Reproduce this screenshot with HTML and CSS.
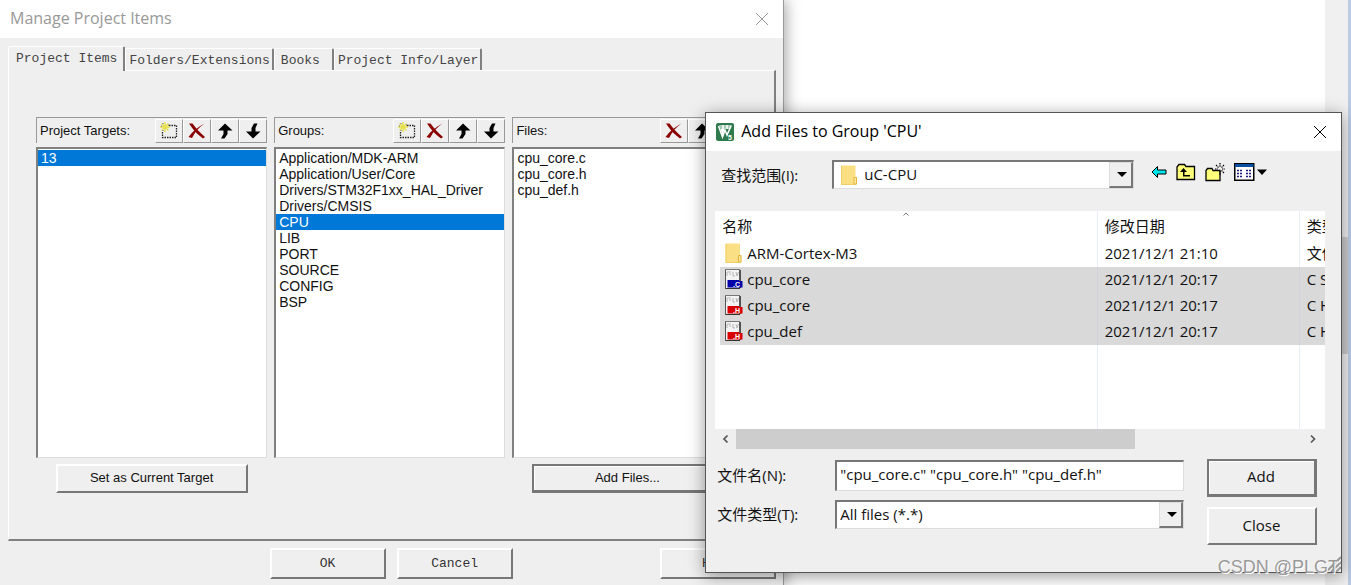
FILE: index.html
```html
<!DOCTYPE html>
<html lang="zh-CN">
<head>
    <meta charset="UTF-8">
    <meta name="viewport" content="width=device-width, initial-scale=1.0">
    <title>Manage Project Items</title>
    <link rel="stylesheet" href="styles.css">
</head>
<body>
    <!-- shared toolbar icons -->
    <svg class="sprite" aria-hidden="true">
        <symbol id="icon-new" viewBox="0 0 18 18">
            <path d="M9 3.5H16.5V15.5H2.5V9" fill="none" stroke="#222" stroke-width="1.3" stroke-dasharray="1.5 1"/>
            <path d="M5 0v10M0 5h10M1.500 1.500l7 7M8.500 1.500l-7 7" stroke="#e6e04a" stroke-width="1.4"/>
            <path d="M3 1v1M1 4h1M8 3h1M3 8v1" stroke="#666" stroke-width="1"/>
        </symbol>
        <symbol id="icon-delete" viewBox="0 0 18 18">
            <path d="M1 1.500L4.500 1.500C8 6 12 11 17 15L15 16.500C10 13 5 8 1 1.500Z" fill="#8b0000"/>
            <path d="M16.500 1.500C11 5 7 10 4 16L.5 15C5 9 10 5 16.500 1.500Z" fill="#8b0000"/>
        </symbol>
        <symbol id="icon-up" viewBox="0 0 18 18">
            <path d="M9 1.500L16.500 8.500H11.500V12L8.500 16.500H5L7.500 12V8.500H2Z" fill="#000"/>
        </symbol>
        <symbol id="icon-down" viewBox="0 0 18 18">
            <path d="M9 16.500L16.500 9.500H11.500V6L13.500 1.500H10L7.500 6V9.500H2Z" fill="#000"/>
        </symbol>
        <symbol id="icon-folder" viewBox="0 0 18 20">
            <path d="M1 .5H15.500V12H17V19.500H1Z" fill="#fbdf85"/>
            <path d="M1.500 1V19M1 19.500H16" stroke="#f0cf68" fill="none"/>
            <path d="M14 12.500H16.500V19H14Z" fill="#ffe9a3" stroke="#e2b63c"/>
        </symbol>
        <symbol id="icon-file" viewBox="0 0 19 20">
            <path d="M1 .5H16V19.500H1Z" fill="#f4f4f4"/>
            <path d="M1.500 0V20" stroke="#555" fill="none"/>
            <path d="M16 1V19" stroke="#222" stroke-width="1.5" fill="none"/>
            <path d="M1 .5H16" stroke="#777" fill="none"/>
            <path d="M3 3H7M3 3V7M5 5H7M9 3v4h2M12 3l1 4 1.500-4" stroke="#b5b5b5" fill="none"/>
            <path d="M3.500 11H15V12H18.500V18.500H3.500Z" fill="currentColor"/>
            <path d="M2 19.500H16" stroke="#333"/>
        </symbol>
    </svg>

    <div class="desktop">
        <div class="editor-scroll"><div class="editor-thumb"></div></div>

        <div class="window manage">
            <div class="titlebar">
                <span class="title">Manage Project Items</span>
                <button class="close" aria-label="Close window">
                    <svg viewBox="0 0 14 14"><path d="M1 1L13 13M13 1L1 13" stroke="currentColor"/></svg>
                </button>
            </div>

            <div class="tabs" role="tablist">
                <button class="tab active" role="tab">Project Items</button>
                <button class="tab" role="tab">Folders/Extensions</button>
                <button class="tab books" role="tab">Books</button>
                <button class="tab" role="tab">Project Info/Layer</button>
            </div>

            <div class="panel">
                <div class="column">
                    <div class="column-head">
                        <span>Project Targets:</span>
                        <div class="tools">
                            <button aria-label="New"><svg><use href="#icon-new"/></svg></button>
                            <button aria-label="Delete"><svg><use href="#icon-delete"/></svg></button>
                            <button aria-label="Move up"><svg><use href="#icon-up"/></svg></button>
                            <button aria-label="Move down"><svg><use href="#icon-down"/></svg></button>
                        </div>
                    </div>
                    <ul class="list">
                        <li class="selected">13</li>
                    </ul>
                    <button class="btn wide">Set as Current Target</button>
                </div>

                <div class="column">
                    <div class="column-head">
                        <span>Groups:</span>
                        <div class="tools">
                            <button aria-label="New"><svg><use href="#icon-new"/></svg></button>
                            <button aria-label="Delete"><svg><use href="#icon-delete"/></svg></button>
                            <button aria-label="Move up"><svg><use href="#icon-up"/></svg></button>
                            <button aria-label="Move down"><svg><use href="#icon-down"/></svg></button>
                        </div>
                    </div>
                    <ul class="list">
                        <li>Application/MDK-ARM</li>
                        <li>Application/User/Core</li>
                        <li>Drivers/STM32F1xx_HAL_Driver</li>
                        <li>Drivers/CMSIS</li>
                        <li class="selected">CPU</li>
                        <li>LIB</li>
                        <li>PORT</li>
                        <li>SOURCE</li>
                        <li>CONFIG</li>
                        <li>BSP</li>
                    </ul>
                </div>

                <div class="column">
                    <div class="column-head">
                        <span>Files:</span>
                        <div class="tools">
                            <button aria-label="Delete"><svg><use href="#icon-delete"/></svg></button>
                            <button aria-label="Move up"><svg><use href="#icon-up"/></svg></button>
                            <button aria-label="Move down"><svg><use href="#icon-down"/></svg></button>
                        </div>
                    </div>
                    <ul class="list">
                        <li>cpu_core.c</li>
                        <li>cpu_core.h</li>
                        <li>cpu_def.h</li>
                    </ul>
                    <button class="btn wide default">Add Files...</button>
                </div>
            </div>

            <div class="manage-footer">
                <button class="btn">OK</button>
                <button class="btn">Cancel</button>
                <button class="btn help">Help</button>
            </div>
        </div>

        <div class="window add-files">
            <div class="titlebar">
                <svg class="app-icon" viewBox="0 0 18 18">
                    <rect width="18" height="18" rx="2" fill="#2f7a4c"/>
                    <path d="M3 2H16L14.500 6H4.500Z" fill="#a9cbb5"/>
                    <path d="M2.500 3L6.500 14L9 7L11 12L15 3M7 2V6M11 2V6" fill="none" stroke="#fff" stroke-width="1.500"/>
                    <path d="M4.500 6H8.500L6.500 14Z" fill="#fff"/>
                    <text x="12" y="17" class="icon-text">5</text>
                </svg>
                <span class="title">Add Files to Group 'CPU'</span>
                <button class="close" aria-label="Close window">
                    <svg viewBox="0 0 14 14"><path d="M1 1L13 13M13 1L1 13" stroke="currentColor"/></svg>
                </button>
            </div>

            <div class="lookin">
                <label for="lookin">查找范围(I):</label>
                <div class="combo with-icon">
                    <svg class="combo-icon"><use href="#icon-folder"/></svg>
                    <select id="lookin">
                        <option>uC-CPU</option>
                    </select>
                </div>
                <div class="nav">
                    <button aria-label="Back">
                        <svg width="16" height="14" viewBox="0 0 16 14"><path d="M1 7L6.500 1.500V5H15V9H6.500V12.500Z" fill="#00e5ee" stroke="#000"/></svg>
                    </button>
                    <button aria-label="Up one level">
                        <svg width="20" height="18" viewBox="0 0 20 18"><path d="M1 16.500V4L3 1.500H8.500L10 3.500H18.500V16.500Z" fill="#ffff7a" stroke="#000" stroke-width="1.300"/><path d="M7.500 5L11 9H8.500V12H14V13.500H7V9H4Z" fill="#000"/></svg>
                    </button>
                    <button aria-label="New folder">
                        <svg width="20" height="19" viewBox="0 0 20 19"><path d="M1 17.500V7.500L2.500 5.500H7L8 7.500H15V17.500Z" fill="#ffff7a" stroke="#000" stroke-width="1.300"/><path d="M15 0v4M15 8v4M10 6h3M17 6h3M11 2l2.500 2.500M19 2l-2.500 2.500M19 10l-2.500-2.500" stroke="#000" stroke-width="1.200" stroke-dasharray="1.500 .7"/></svg>
                    </button>
                    <button aria-label="View">
                        <svg width="33" height="18" viewBox="0 0 33 18"><rect x=".75" y=".75" width="19" height="16.500" fill="#fff" stroke="#000" stroke-width="1.500"/><rect x="1" y="1" width="18.500" height="3" fill="#0a4fa0"/><path d="M3 7.500H9M12 7.500H18M3 10.500H9M12 10.500H18M3 13.500H9M12 13.500H18" stroke="#1c1c7c" stroke-width="1.500" stroke-dasharray="2 1"/><path d="M23 6.500H33L28 12Z" fill="#000"/></svg>
                    </button>
                </div>
            </div>

            <div class="browser">
                <svg class="sort-mark" viewBox="0 0 6 4"><path d="M.5 3.500L3 1L5.500 3.500" fill="none" stroke="#777"/></svg>
                <table>
                    <thead>
                        <tr><th class="name">名称</th><th class="date">修改日期</th><th>类型</th></tr>
                    </thead>
                    <tbody>
                        <tr>
                            <td><div class="file"><svg><use href="#icon-folder"/></svg>ARM-Cortex-M3</div></td>
                            <td>2021/12/1 21:10</td>
                            <td>文件夹</td>
                        </tr>
                        <tr class="picked">
                            <td><div class="file"><svg class="c"><use href="#icon-file"/><text x="9" y="18" class="icon-text">.C</text></svg>cpu_core</div></td>
                            <td>2021/12/1 20:17</td>
                            <td>C Source</td>
                        </tr>
                        <tr class="picked">
                            <td><div class="file"><svg class="h"><use href="#icon-file"/><text x="9" y="18" class="icon-text">.H</text></svg>cpu_core</div></td>
                            <td>2021/12/1 20:17</td>
                            <td>C Header</td>
                        </tr>
                        <tr class="picked">
                            <td><div class="file"><svg class="h"><use href="#icon-file"/><text x="9" y="18" class="icon-text">.H</text></svg>cpu_def</div></td>
                            <td>2021/12/1 20:17</td>
                            <td>C Header</td>
                        </tr>
                        <tr class="filler"><td></td><td></td><td></td></tr>
                    </tbody>
                </table>
            </div>
            <div class="hscroll">
                <button aria-label="Scroll left"><svg viewBox="0 0 8 10"><path d="M5.500 1.500L2 5L5.500 8.500" fill="none" stroke="#555" stroke-width="1.700"/></svg></button>
                <div class="track"><div class="thumb"></div></div>
                <button aria-label="Scroll right"><svg viewBox="0 0 8 10"><path d="M2 1.500L5.500 5L2 8.500" fill="none" stroke="#555" stroke-width="1.700"/></svg></button>
            </div>

            <form class="bottom">
                <div class="fields">
                    <div class="field">
                        <label for="filename">文件名(N):</label>
                        <input id="filename" type="text" value='"cpu_core.c" "cpu_core.h" "cpu_def.h"'>
                    </div>
                    <div class="field">
                        <label for="filetype">文件类型(T):</label>
                        <div class="combo">
                            <select id="filetype">
                                <option>All files (*.*)</option>
                            </select>
                        </div>
                    </div>
                </div>
                <div class="actions">
                    <button type="button" class="btn default">Add</button>
                    <button type="button" class="btn">Close</button>
                </div>
            </form>
            <svg class="grip" viewBox="0 0 16 16"><path d="M1 16L16 1M6 16L16 6M11 16L16 11" stroke="#999" stroke-width="2"/></svg>
        </div>

        <div class="watermark">CSDN @PLGT</div>
    </div>
</body>
</html>
```
FILE: styles.css
```css
* {
    box-sizing: border-box;
}

body {
    margin: 0;
    font-family: "Open Sans", "Noto Sans CJK SC", sans-serif;
    font-size: 15px;
    color: #111;
}

button, input, select {
    font: inherit;
    color: inherit;
    margin: 0;
}

.sprite {
    display: none;
}

.desktop {
    position: relative;
    height: 100vh;
    overflow: hidden;
    background: #fff;
}

/* editor behind the dialogs */
.editor-scroll {
    position: absolute;
    top: 0;
    right: 0;
    width: 26px;
    height: 100%;
    padding-top: 237px;
    background: #f0f0f0;
    border-right: 3px solid #bccbe2;
}

.editor-thumb {
    height: 117px;
    background: #cdcdcd;
}

.window {
    position: absolute;
    background: #efefef;
}

.titlebar {
    display: flex;
    align-items: center;
    height: 38px;
    padding: 0 14px 0 10px;
    background: #fff;
}

.title {
    flex: 1;
    font-size: 16px;
    line-height: 20px;
    padding-bottom: 2px;
}

.close {
    display: flex;
    padding: 0;
    border: none;
    background: none;
}

.close svg {
    width: 14px;
    height: 14px;
}

/* Manage Project Items */
.manage {
    top: 0;
    left: 0;
    width: 58%;
    min-height: 100%;
    border-right: 1px solid #999;
    box-shadow: 2px 0 14px rgba(0, 0, 0, 0.35);
}

.manage .titlebar {
    color: #999;
}

.tabs {
    display: flex;
    align-items: flex-end;
    height: 31px;
    margin-top: 1px;
    padding-left: 8px;
    font-family: "Liberation Mono", monospace;
    font-size: 13px;
}

.tab {
    height: 22px;
    padding: 2px 2px 0 3px;
    border: 1px solid #fff;
    border-right: 2px solid #808080;
    border-bottom: none;
    border-radius: 2px 2px 0 0;
    background: #efefef;
    color: #444;
    white-space: nowrap;
}

.tab.active {
    position: relative;
    height: 25px;
    margin-bottom: -1px;
    padding: 0 6px 2px 7px;
}

.tab.books {
    padding-left: 6px;
    padding-right: 12px;
}

.panel {
    display: grid;
    grid-template-columns: repeat(3, 1fr);
    column-gap: 7px;
    margin: 0 7px 0 8px;
    padding: 46px 30px 46px 27px;
    border: 1px solid #fff;
    border-right: 2px solid #808080;
    border-bottom: 2px solid #808080;
    font-family: "Liberation Sans", Arial, sans-serif;
    font-size: 14px;
}

.column-head {
    display: flex;
    justify-content: space-between;
    align-items: center;
    height: 26px;
    padding-left: 3px;
    border-top: 1px solid #999;
    border-left: 1px solid #999;
    font-size: 13px;
}

.tools {
    display: flex;
}

.tools button {
    display: flex;
    justify-content: center;
    align-items: center;
    width: 28px;
    height: 24px;
    padding: 0;
    border: 1px solid #fff;
    border-right-color: #999;
    border-bottom-color: #999;
    background: #efefef;
}

.tools svg {
    width: 18px;
    height: 18px;
}

.list {
    height: 311px;
    margin: 4px 0 6px;
    padding: 1px 0;
    border: 2px solid #808080;
    border-right: 1px solid #ddd;
    border-bottom: 1px solid #ddd;
    background: #fff;
    list-style: none;
}

.list li {
    padding: 0 3px;
    line-height: 16px;
    height: 16px;
}

.list .selected {
    background: #0078d7;
    color: #fff;
}

.btn {
    padding: 0;
    border: 2px solid #fff;
    border-right-color: #777;
    border-bottom-color: #777;
    background: #efefef;
}

.btn.default {
    border: 2px solid #777;
    border-right-width: 3px;
    border-bottom-width: 3px;
    box-shadow: inset 1px 1px #fff;
}

.btn.wide {
    display: block;
    width: 192px;
    height: 29px;
    margin: 0 auto;
    padding-bottom: 2px;
    font-size: 13px;
}

.manage-footer {
    display: flex;
    justify-content: flex-end;
    gap: 11px;
    padding: 7px;
    font-family: "Liberation Mono", monospace;
    font-size: 13px;
    color: #333;
}

.manage-footer .btn {
    width: 116px;
    height: 31px;
}

.manage-footer .help {
    margin-left: 136px;
}

/* Add Files to Group */
.add-files {
    top: 112px;
    left: 52.2%;
    width: 47.1%;
    border: 1px solid #555;
    box-shadow: 0 3px 16px rgba(0, 0, 0, 0.4);
}

.add-files .titlebar {
    gap: 7px;
    color: #000;
}

.app-icon {
    width: 18px;
    height: 18px;
}

.icon-text {
    font-family: "Liberation Sans", Arial, sans-serif;
    font-size: 7px;
    font-weight: bold;
    fill: #fff;
}

.lookin {
    display: flex;
    align-items: center;
    height: 60px;
    padding: 0 72px 14px 15px;
}

.lookin label {
    width: 111px;
}

.combo {
    position: relative;
    flex: 1;
    height: 29px;
    border: 2px solid #777;
    border-right: 1px solid #ddd;
    border-bottom: 1px solid #ddd;
    background: #fff;
}

.combo select {
    display: block;
    width: 100%;
    height: 100%;
    padding: 0 24px 2px 3px;
    border: none;
    background: none;
    appearance: none;
}

.combo::before {
    content: "";
    position: absolute;
    top: 0;
    right: 0;
    bottom: 0;
    width: 21px;
    border: 1px solid #ddd;
    border-right: 2px solid #777;
    border-bottom: 2px solid #777;
    background: #efefef;
    pointer-events: none;
}

.combo::after {
    content: "";
    position: absolute;
    top: 10px;
    right: 6px;
    border: 5px solid transparent;
    border-top-color: #000;
    border-bottom: none;
    pointer-events: none;
}

.combo.with-icon select {
    padding-left: 30px;
}

.combo-icon {
    position: absolute;
    top: 3px;
    left: 6px;
    width: 18px;
    height: 20px;
}

.nav {
    display: flex;
    align-items: center;
    gap: 9px;
    margin-left: 17px;
    padding-right: 2px;
    padding-bottom: 4px;
}

.nav button {
    display: flex;
    padding: 0;
    border: none;
    background: none;
}

.browser {
    position: relative;
    height: 218px;
    margin: 0 16px 0 9px;
    padding-left: 5px;
    overflow: hidden;
    background: #fff;
}

.sort-mark {
    position: absolute;
    top: 1px;
    left: 188px;
    width: 6px;
    height: 4px;
}

.browser table {
    width: 740px;
    table-layout: fixed;
    border-collapse: collapse;
}

.browser th {
    height: 30px;
    padding: 0 7px 2px;
    font-weight: normal;
    text-align: left;
}

.browser .name {
    width: 377px;
    padding-left: 2px;
}

.browser .date {
    width: 202px;
}

.browser td {
    height: 26px;
    padding: 0 7px 2px;
    line-height: 20px;
}

.browser td:first-child {
    padding-left: 4px;
}

.browser th + th, .browser td + td {
    border-left: 1px solid #e8eef5;
}

.browser .picked {
    background: #d9d9d9;
}

.browser .picked td + td {
    border-left-color: #d0d4da;
}

.browser .filler td {
    height: 90px;
}

.file {
    display: flex;
    align-items: center;
    gap: 4px;
}

.file svg {
    width: 19px;
    height: 20px;
}

.file .c {
    color: #0000a8;
}

.file .h {
    color: #d80000;
}

.hscroll {
    display: flex;
    height: 20px;
    margin: 0 5px 0 9px;
}

.hscroll button {
    display: flex;
    justify-content: center;
    align-items: center;
    width: 21px;
    padding: 0;
    border: none;
    background: none;
}

.hscroll button:last-child {
    width: 45px;
}

.hscroll svg {
    width: 8px;
    height: 10px;
}

.track {
    flex: 1;
}

.thumb {
    width: 72%;
    height: 100%;
    background: #cdcdcd;
}

.bottom {
    display: flex;
    gap: 23px;
    margin: 0;
    padding: 10px 24px 27px 11px;
}

.fields {
    display: flex;
    flex: 1;
    flex-direction: column;
    gap: 9px;
    padding-top: 1px;
}

.field {
    display: flex;
    align-items: center;
}

.field label {
    width: 118px;
    padding-bottom: 2px;
}

.field input {
    flex: 1;
    min-width: 0;
    height: 31px;
    padding: 0 3px 5px;
    border: 2px solid #777;
    border-right: 1px solid #ddd;
    border-bottom: 1px solid #ddd;
    background: #fff;
}

.actions {
    display: flex;
    flex-direction: column;
    gap: 10px;
    width: 110px;
}

.actions .btn {
    height: 38px;
    padding-bottom: 3px;
}

.grip {
    position: absolute;
    right: 0;
    bottom: 0;
    width: 16px;
    height: 16px;
}

.watermark {
    position: absolute;
    right: 12px;
    bottom: 7px;
    font-family: "Liberation Sans", Arial, sans-serif;
    font-size: 18px;
    color: #999;
    text-shadow: 1px 1px #fff;
}
```
